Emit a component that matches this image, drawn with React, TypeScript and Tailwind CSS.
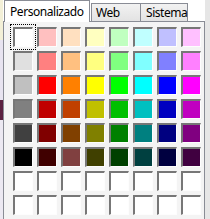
import React from "react";

const rows: string[][] = [
  ["#ffffff", "#ffc0c0", "#ffe0c0", "#ffffc0", "#c0ffc0", "#c0ffff", "#c0c0ff", "#ffc0ff"],
  ["#e0e0e0", "#ff8080", "#ffc080", "#ffff80", "#80ff80", "#80ffff", "#8080ff", "#ff80ff"],
  ["#c0c0c0", "#ff0000", "#ff8000", "#ffff00", "#00ff00", "#00ffff", "#0000ff", "#ff00ff"],
  ["#808080", "#c00000", "#c04000", "#c0c000", "#00c000", "#00c0c0", "#0000c0", "#c000c0"],
  ["#404040", "#800000", "#804000", "#808000", "#008000", "#008080", "#000080", "#800080"],
  ["#000000", "#400000", "#804040", "#404000", "#004000", "#004040", "#000040", "#400040"],
  ["#ffffff", "#ffffff", "#ffffff", "#ffffff", "#ffffff", "#ffffff", "#ffffff", "#ffffff"],
  ["#ffffff", "#ffffff", "#ffffff", "#ffffff", "#ffffff", "#ffffff", "#ffffff", "#ffffff"],
];

export default function App() {
  return (
    <div
      className="flex w-[210px] h-[219px] overflow-hidden bg-white text-[12px] tracking-[-0.45px] text-black"
      style={{ fontFamily: '"Noto Sans", "Liberation Sans", sans-serif' }}
    >
      <div className="w-[3px] flex flex-col">
        <div className="h-[40px] bg-[#f3f0d8]" />
        <div className="h-[60px] bg-[#e8e4f0]" />
        <div className="h-[20px] bg-[#5a2040]" />
        <div className="flex-1 bg-[#ece9f2]" />
      </div>
      <div className="flex flex-col w-[202px]">
        <div className="flex items-end h-[21px] pl-[1px]">
          <div className="h-[22px] w-[86px] -mb-[1px] pl-[5px] bg-white border border-b-0 border-[#898c95] flex items-center z-10 relative">
            Personalizado
          </div>
          <div className="h-[18px] w-[50px] ml-[1px] pl-[4px] bg-gradient-to-b from-[#f2f2f2] to-[#e3e3e3] border border-b-0 border-[#898c95] flex items-center">
            Web
          </div>
          <div className="h-[18px] w-[48px] -ml-[1px] pl-[5px] bg-gradient-to-b from-[#f2f2f2] to-[#e3e3e3] border border-b-0 border-[#898c95] flex items-center">
            Sistema
          </div>
        </div>
        <div className="flex-1 bg-[#f4f4f4] border border-b-0 border-[#898c95] pl-[9px] pt-[5px]">
          <div className="grid grid-cols-[repeat(8,20px)] auto-rows-[20px] gap-[4px]">
            {rows.flatMap((row, r) =>
              row.map((c, i) => (
                <div
                  key={`${r}-${i}`}
                  className={
                    "border-t-2 border-l-2 border-r border-b border-t-[#777777] border-l-[#777777] border-r-[#fdfdfd] border-b-[#fdfdfd]" +
                    (r === 0 && i === 0 ? " outline outline-1 outline-dotted outline-black outline-offset-2" : "")
                  }
                  style={{ backgroundColor: c }}
                />
              ))
            )}
          </div>
        </div>
      </div>
      <div className="flex-1 bg-[#e6e6e6]" />
    </div>
  );
}
